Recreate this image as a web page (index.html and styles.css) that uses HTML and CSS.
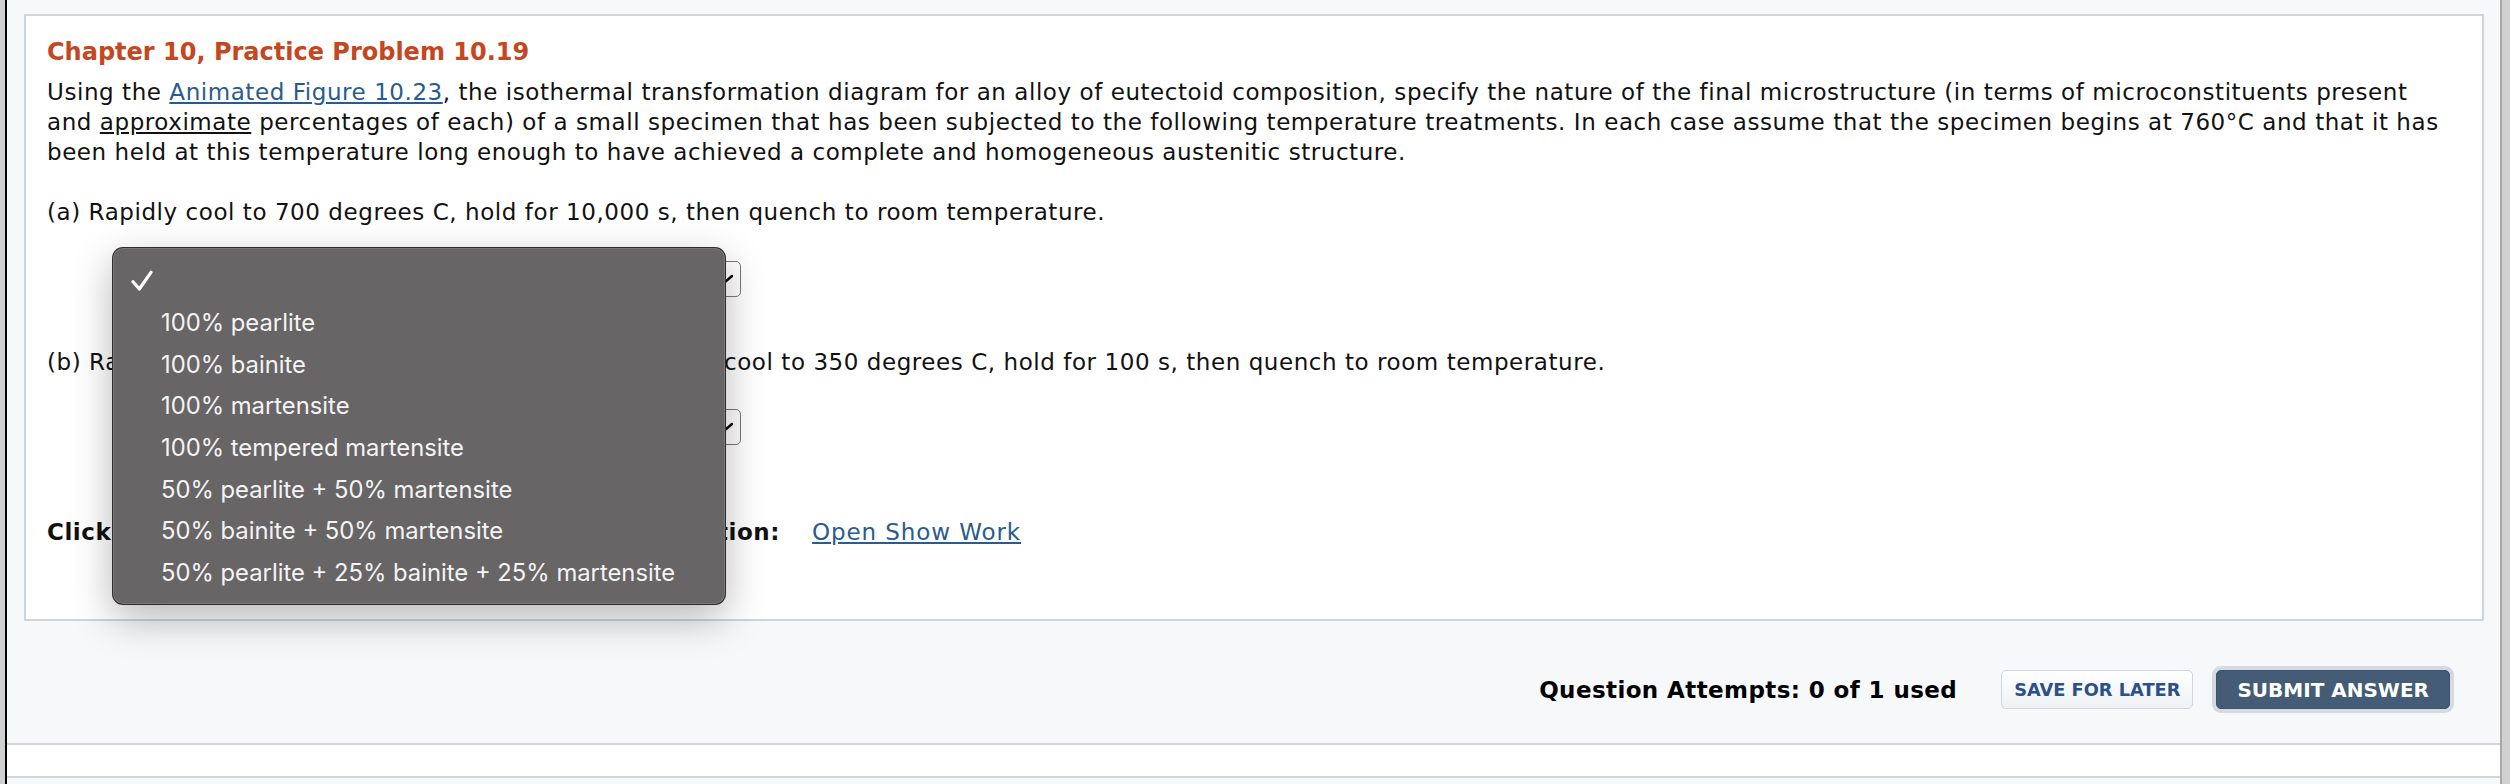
FILE: index.html
```html
<!DOCTYPE html>
<html>
<head>
    <title>Chapter 10, Practice Problem 10.19</title>
    <link rel="stylesheet" href="styles.css">
</head>
<body>
    <div class="window">

        <div class="question-card">
            <h2 class="question-title">Chapter 10, Practice Problem 10.19</h2>

            <p class="question-text">Using the <a href="#">Animated Figure 10.23</a>, the isothermal transformation diagram for an alloy of eutectoid composition, specify the nature of the final microstructure (in terms of microconstituents present<br>and <u>approximate</u> percentages of each) of a small specimen that has been subjected to the following temperature treatments. In each case assume that the specimen begins at 760&deg;C and that it has been held at this temperature long enough to have achieved a complete and homogeneous austenitic structure.</p>

            <p class="part part-a">(a) Rapidly cool to 700 degrees C, hold for 10,000 s, then quench to room temperature.</p>
            <div class="answer-select">
                <svg class="select-arrow" width="18" height="10" viewBox="0 0 18 10"><path d="M2 2 L9 8 L16 2" fill="none" stroke="#000" stroke-width="2.4" stroke-linecap="round" stroke-linejoin="round"/></svg>
            </div>

            <p class="part part-b">(b) Rapidly cool to 575 degrees C, hold for 20 s, rapidly cool to 350 degrees C, hold for 100 s, then quench to room temperature.</p>
            <div class="answer-select">
                <svg class="select-arrow" width="18" height="10" viewBox="0 0 18 10"><path d="M2 2 L9 8 L16 2" fill="none" stroke="#000" stroke-width="2.4" stroke-linecap="round" stroke-linejoin="round"/></svg>
            </div>

            <p class="show-work"><b>Click if you would like to Show Work for this question:</b><a href="#">Open Show Work</a></p>

            <!-- open dropdown of select (a) -->
            <div class="select-menu">
                <div class="menu-item checked">
                    <svg class="check" width="22" height="22" viewBox="0 0 22 22"><path d="M2 11.7 L8.3 19 L20 2.3" fill="none" stroke="#fff" stroke-width="3.2" stroke-linecap="round" stroke-linejoin="round"/></svg>
                </div>
                <div class="menu-item">100% pearlite</div>
                <div class="menu-item">100% bainite</div>
                <div class="menu-item">100% martensite</div>
                <div class="menu-item">100% tempered martensite</div>
                <div class="menu-item">50% pearlite + 50% martensite</div>
                <div class="menu-item">50% bainite + 50% martensite</div>
                <div class="menu-item">50% pearlite + 25% bainite + 25% martensite</div>
            </div>
        </div>

        <div class="question-footer">
            <span class="attempts">Question Attempts: 0 of 1 used</span>
            <button class="btn-save">SAVE FOR LATER</button>
            <button class="btn-submit">SUBMIT ANSWER</button>
        </div>

        <div class="footer-band"></div>

    </div>
</body>
</html>
```

FILE: styles.css
```css
/* GENERAL */
body {
    margin: 0;
    padding: 0 8px 0 5px;
    background-color: #d0d0d0;
    font-family: "DejaVu Sans", Verdana, sans-serif;
    color: #111;
}

.window {
    height: 784px;
    background-color: #f7f8fa;
    border-left: 2px solid #000;
    border-right: 2px solid #a8a8a8;
    overflow: hidden;
}

a {
    color: #2a5b8e;
}


/* QUESTION CARD */
.question-card {
    position: relative;
    margin: 14px 16px 0 17px;
    padding: 21px 21px 72px 21px;
    background-color: #fff;
    border: 2px solid #cdd5e0;
}

.question-title {
    margin: 0;
    font-size: 24px;
    line-height: 30px;
    font-weight: bold;
    color: #c4471f;
}

/* Verdana is wider than DejaVu, so spacing makes up the difference */
.question-text,
.part,
.show-work {
    margin: 0;
    font-size: 23px;
    line-height: 30px;
    letter-spacing: 0.56px;
}

.question-text {
    margin-top: 10px;
}

.part-a {
    margin-top: 30px;
}

.part-b {
    margin-top: 50px;
}

.show-work {
    margin-top: 72px;
}

.show-work b {
    letter-spacing: 0.55px;
}

.show-work a {
    margin-left: 32px;
    letter-spacing: 0.9px;
}


/* SELECT */
.answer-select {
    display: flex;
    align-items: center;
    justify-content: flex-end;
    box-sizing: border-box;
    width: 628px;
    height: 36px;
    margin: 34px 0 0 66px;
    padding-right: 6px;
    background-color: #fff;
    border: 1px solid #7a7a7a;
    border-radius: 5px;
}

.part-b + .answer-select {
    margin-top: 32px;
}


/* OPEN DROPDOWN */
.select-menu {
    position: absolute;
    left: 86px;
    top: 231px;
    box-sizing: border-box;
    width: 614px;
    padding: 12px 0 10px 0;
    background-color: #686566;
    border: 1px solid rgba(0, 0, 0, 0.55);
    border-radius: 11px;
    box-shadow: inset 0 0 0 1px rgba(255, 255, 255, 0.13), 0 14px 40px rgba(0, 0, 0, 0.28);
    font-family: Inter, "Noto Sans", sans-serif;
    font-size: 23.8px;
    color: #f4f4f4;
}

.menu-item {
    display: flex;
    align-items: center;
    height: 41.7px;
    padding-left: 48px;
}

.menu-item.checked {
    padding-left: 18px;
}


/* FOOTER */
.question-footer {
    display: flex;
    align-items: center;
    justify-content: flex-end;
    padding: 49px 50px 34px 0;
    border-bottom: 2px solid #cfd5dd;
}

.attempts {
    margin-right: 44px;
    font-size: 23px;
    font-weight: bold;
    letter-spacing: 0.4px;
    color: #000;
}

.btn-save,
.btn-submit {
    box-sizing: border-box;
    height: 39px;
    font-family: "DejaVu Sans", Verdana, sans-serif;
    font-weight: bold;
    border-radius: 5px;
    cursor: pointer;
}

.btn-save {
    padding: 0 12px;
    font-size: 17.8px;
    color: #2c5089;
    background: linear-gradient(#ffffff, #eef1f5);
    border: 1px solid #cfd6e0;
}

.btn-submit {
    margin-left: 23px;
    padding: 0 20px;
    font-size: 20px;
    color: #fff;
    background-color: #445c75;
    border: 1px solid #3c536b;
    box-shadow: 0 0 0 4px #d3dae3;
}

.footer-band {
    height: 31px;
    background-color: #fff;
    border-bottom: 2px solid #cfd5dd;
}
```
